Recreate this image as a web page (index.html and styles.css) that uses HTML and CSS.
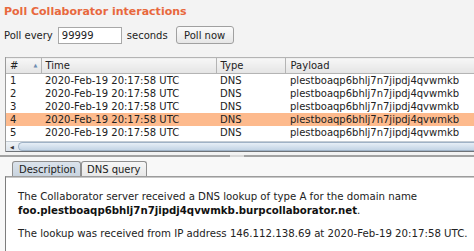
FILE: index.html
```html
<!DOCTYPE html>
<html lang="en">
<head>
    <meta charset="UTF-8" />
    <title>Poll Collaborator interactions</title>
    <link rel="stylesheet" href="styles.css">
</head>
<body>
<main class="collab">
    <h1 class="collab__title">Poll Collaborator interactions</h1>

    <div class="collab__poll">
        <span>Poll every</span>
        <input class="collab__input" type="text" value="99999" />
        <span class="collab__seconds">seconds</span>
        <button class="collab__button" type="button">Poll now</button>
    </div>

    <div class="grid">
        <div class="grid__viewport">
            <table class="grid__table">
                <colgroup>
                    <col class="grid__col-num">
                    <col class="grid__col-time">
                    <col class="grid__col-type">
                    <col class="grid__col-payload">
                </colgroup>
                <thead>
                    <tr>
                        <th>#<span class="grid__sort">&#9650;</span></th>
                        <th>Time</th>
                        <th>Type</th>
                        <th class="grid__payload">Payload</th>
                    </tr>
                </thead>
                <tbody>
                    <tr><td>1</td><td>2020-Feb-19 20:17:58 UTC</td><td>DNS</td><td class="grid__payload">plestboaqp6bhlj7n7jipdj4qvwmkb</td></tr>
                    <tr><td>2</td><td>2020-Feb-19 20:17:58 UTC</td><td>DNS</td><td class="grid__payload">plestboaqp6bhlj7n7jipdj4qvwmkb</td></tr>
                    <tr><td>3</td><td>2020-Feb-19 20:17:58 UTC</td><td>DNS</td><td class="grid__payload">plestboaqp6bhlj7n7jipdj4qvwmkb</td></tr>
                    <tr class="grid__row--selected"><td>4</td><td>2020-Feb-19 20:17:58 UTC</td><td>DNS</td><td class="grid__payload">plestboaqp6bhlj7n7jipdj4qvwmkb</td></tr>
                    <tr><td>5</td><td>2020-Feb-19 20:17:58 UTC</td><td>DNS</td><td class="grid__payload">plestboaqp6bhlj7n7jipdj4qvwmkb</td></tr>
                </tbody>
            </table>
        </div>
        <div class="scrollbar">
            <span class="scrollbar__arrow">&#9664;</span>
            <span class="scrollbar__thumb"></span>
        </div>
    </div>

    <div class="splitter"><span class="splitter__grip"></span></div>

    <div class="tabs">
        <div class="tabs__bar">
            <span class="tabs__tab tabs__tab--active">Description</span>
            <span class="tabs__tab">DNS query</span>
        </div>
        <div class="tabs__panel">
            <p>The Collaborator server received a DNS lookup of type A for the domain name<br>
                <b>foo.plestboaqp6bhlj7n7jipdj4qvwmkb.burpcollaborator.net</b>.</p>
            <p>The lookup was received from IP address 146.112.138.69 at 2020-Feb-19 20:17:58 UTC.</p>
        </div>
    </div>
</main>
</body>
</html>
```

FILE: styles.css
```css
*,
*::before,
*::after {
    box-sizing: border-box;
}

html,
body,
h1,
p {
    margin: 0;
    padding: 0;
}

body {
    font-family: 'DejaVu Sans', sans-serif;
    font-size: 10px;
    color: #222;
    background: #f3f3f3;
    width: 474px;
    height: 251px;
    overflow: hidden;
}

.collab__title {
    font-size: 11px;
    font-weight: bold;
    color: #e8683d;
    padding: 5px 0 0 4px;
    height: 24px;
}

.collab__poll {
    display: flex;
    align-items: center;
    padding-left: 4px;
    height: 22px;
}
.collab__input {
    font: inherit;
    color: #222;
    width: 64px;
    height: 17px;
    margin-left: 5px;
    padding: 0 3px;
    border: 1px solid #a8a8a8;
    background: #fff;
}
.collab__seconds {
    margin-left: 5px;
}
.collab__button {
    font: inherit;
    color: #222;
    margin-left: 8px;
    height: 18px;
    width: 58px;
    padding: 0;
    border: 1px solid #a0a0a0;
    border-radius: 3px;
    background: linear-gradient(180deg, #fbfbfb 0%, #e6e6e6 100%);
}

.grid {
    margin: 11px 0 0 5px;
    border-left: 1px solid #9a9a9a;
    overflow: hidden;
}
.grid__viewport {
    background: #fff;
    height: 84px;
}
.grid__table {
    border-collapse: collapse;
    table-layout: fixed;
    width: 519px;
}
.grid__col-num { width: 35px; }
.grid__col-time { width: 175px; }
.grid__col-type { width: 69px; }
.grid__col-payload { width: 240px; }

.grid__table th {
    font-weight: normal;
    text-align: left;
    white-space: nowrap;
    height: 16px;
    padding: 0 4px;
    background: linear-gradient(180deg, #f7f7f7 0%, #e4e4e4 100%);
    border-top: 1px solid #b4b4b4;
    border-bottom: 1px solid #b4b4b4;
    border-right: 1px solid #b4b4b4;
}
.grid__sort {
    font-size: 5px;
    color: #6f8db0;
    margin-left: 15px;
    vertical-align: 2px;
}
.grid__table td {
    height: 13px;
    line-height: 13px;
    padding: 0 3px 0 4px;
    white-space: nowrap;
}
.grid__table .grid__payload {
    padding-left: 5px;
}
.grid__row--selected td {
    background: #fdba8d;
}

.scrollbar {
    display: flex;
    align-items: center;
    height: 11px;
    background: linear-gradient(180deg, #eef2f6 0%, #dde4ec 100%);
    border-top: 1px solid #c4ccd4;
    border-bottom: 1px solid #6f7378;
}
.scrollbar__arrow {
    font-size: 5px;
    color: #333;
    width: 12px;
    text-align: center;
}
.scrollbar__thumb {
    flex: 1;
    height: 9px;
    border: 1px solid #9fb2c6;
    border-right: none;
    border-radius: 5px 0 0 5px;
    background: linear-gradient(180deg, #e6eef6 0%, #c3d4e5 100%);
}

.splitter {
    height: 5px;
    border-bottom: 2px solid #a2a2a2;
    display: flex;
    justify-content: center;
    align-items: flex-end;
}
.splitter__grip {
    width: 14px;
    height: 2px;
    margin-bottom: -2px;
    background: #d8d8d8;
}

.tabs {
    padding: 4px 0 0 5px;
    background: #f8f8f8;
}
.tabs__bar {
    display: flex;
    padding-left: 7px;
}
.tabs__tab {
    height: 15px;
    line-height: 15px;
    padding: 0 5px;
    border: 1px solid #8f8f8f;
    border-bottom: none;
    border-radius: 3px 3px 0 0;
    background: linear-gradient(180deg, #f6f6f6 0%, #e8e8e8 100%);
}
.tabs__tab--active {
    background: linear-gradient(180deg, #dbe3ec 0%, #c9d4df 100%);
    padding: 0 4px 0 6px;
}
.tabs__panel {
    font-size: 10.2px;
    white-space: nowrap;
    background: #fff;
    border-top: 1px solid #9c9c9c;
    box-shadow: inset 0 1px 0 #c8c8c8;
    border-left: 1px solid #7d7d7d;
    padding: 13px 0 0 12px;
    height: 80px;
    line-height: 14px;
}
.tabs__panel p {
    margin-bottom: 9px;
}
.tabs__panel b {
    color: #111;
}
```
